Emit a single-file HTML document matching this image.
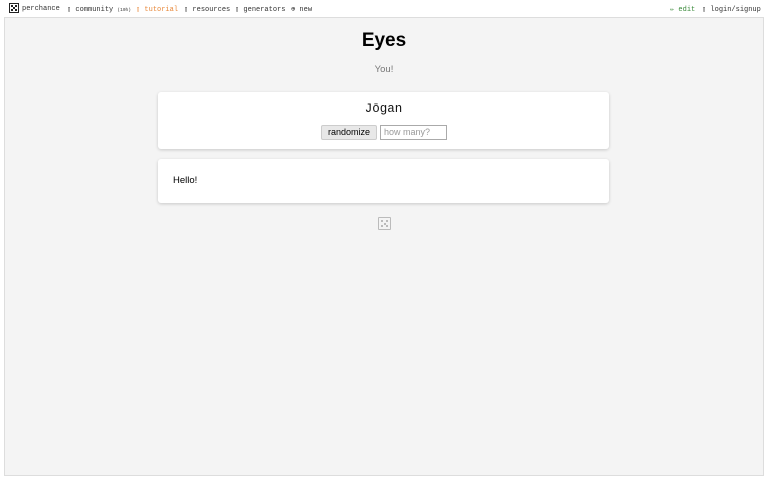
<!DOCTYPE html>
<html><head><meta charset="utf-8"><style>
*{margin:0;padding:0;box-sizing:border-box}
body{width:768px;height:480px;background:#fff;position:relative;overflow:hidden;font-family:"Liberation Sans",sans-serif}
.nav{position:absolute;top:0;left:0;width:768px;height:17px;font-family:"Liberation Mono",monospace;font-size:7px;color:#333}
.nav span{position:absolute;top:5px;white-space:nowrap}
.frame{position:absolute;left:4px;top:17px;width:760px;height:459px;background:#f4f4f4;border:1px solid #ddd}
h1{position:absolute;top:30px;left:0;width:768px;text-align:center;font-size:19px;font-weight:bold;color:#000}
.sub{position:absolute;top:64px;width:768px;text-align:center;font-size:9.5px;color:#777}
.card{position:absolute;left:158px;width:451px;background:#fff;border-radius:3px;box-shadow:0 1px 3px rgba(0,0,0,.18)}
.c1{top:92px;height:57px}
.c2{top:159px;height:44px}
.name{position:absolute;top:10px;width:100%;text-align:center;font-family:"Liberation Mono",monospace;font-size:12.5px;color:#111}
.btn{position:absolute;left:163px;top:33px;width:56px;height:15px;background:#e8e8e8;border:1px solid #ccc;border-radius:2px;font-size:9px;text-align:center;line-height:13px;color:#000}
.inp{position:absolute;left:222px;top:33px;width:67px;height:15px;border:1px solid #aaa;font-size:9px;color:#999;padding-left:3px;line-height:13px}
.hello{position:absolute;left:15px;top:16px;font-size:9.5px;color:#000}
.die{position:absolute;left:378px;top:217px;width:13px;height:13px;border:1px solid #bbb;border-radius:1px}
.die i{position:absolute;width:2px;height:2px;background:#bbb}
.ld{position:absolute;left:9px;top:3px;width:10px;height:10px;border:1px solid #222}
.ld i{position:absolute;width:2px;height:2px;background:#222}
</style></head><body>
<div class="frame"></div>
<div class="nav">
<div class="ld"><i style="left:1px;top:1px"></i><i style="right:1px;top:1px"></i><i style="left:3px;top:3px"></i><i style="left:1px;bottom:1px"></i><i style="right:1px;bottom:1px"></i></div>
<span style="left:22px">perchance</span>
<span style="left:67px">▯ community <small style="font-size:4.5px">(10h)</small></span>
<span style="left:136px;color:#e8883a">▯ tutorial</span>
<span style="left:184px">▯ resources</span>
<span style="left:235px">▯ generators</span>
<span style="left:291px">⊕ new</span>
<span style="left:670px;color:#3a8a3a">✏ edit</span>
<span style="left:702px">▯ login/signup</span>
</div>
<h1>Eyes</h1>
<div class="sub">You!</div>
<div class="card c1"><div class="name">Jōgan</div><div class="btn">randomize</div><div class="inp">how many?</div></div>
<div class="card c2"><div class="hello">Hello!</div></div>
<div class="die"><i style="left:2px;top:2px"></i><i style="right:2px;top:2px"></i><i style="left:4.5px;top:4.5px"></i><i style="left:2px;bottom:2px"></i><i style="right:2px;bottom:2px"></i></div>
</body></html>
